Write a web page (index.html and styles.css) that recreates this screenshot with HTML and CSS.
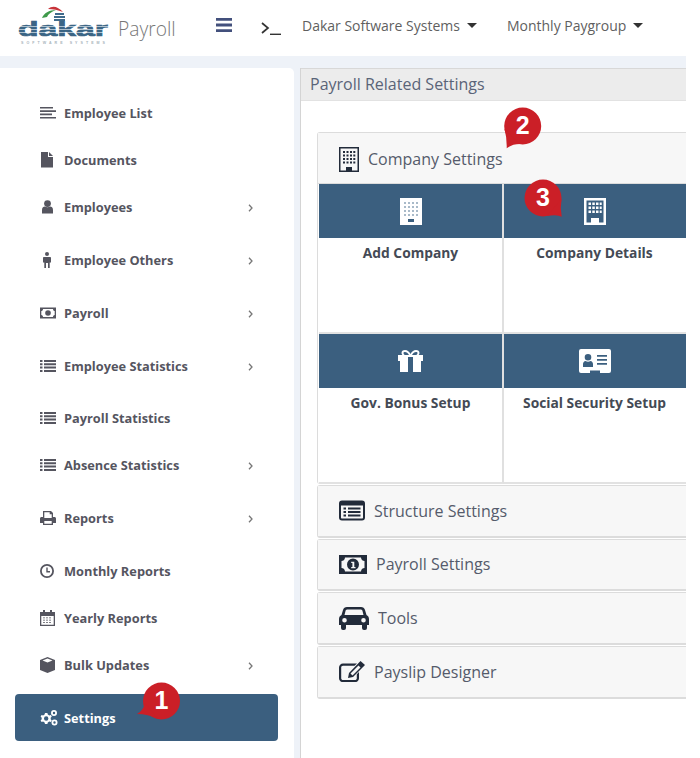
FILE: index.html
```html
<!DOCTYPE html>
<html lang="en">
<head>
<meta charset="utf-8">
<title>Payroll Related Settings</title>
<link rel="stylesheet" href="styles.css">
</head>
<body>
<div class="page">
  <header class="top">
    <svg class="logo" viewBox="0 0 92 40" aria-hidden="true">
      <path d="M31 3C36-1 41 1 46 6 41 4 36 3 31 3Z" fill="#c8343a"/>
      <path d="M25 12C27 7 32 4 39 4 34 6 31 8 30 11Z" fill="#3f9a4a"/>
      <rect x="38" y="7" width="9" height="2" fill="#3f6b8c"/>
      <rect x="37" y="10" width="11" height="2" fill="#3f6b8c"/>
      <rect x="37" y="13" width="11" height="2" fill="#3f6b8c"/>
      <text class="logo-word" x="46" y="30" text-anchor="middle" textLength="90" lengthAdjust="spacingAndGlyphs">dakar</text>
      <g class="logo-lines">
        <path d="M0 20.500H92M0 23.500H92M0 26.500H92"/>
      </g>
      <text class="logo-sub" x="46" y="38" text-anchor="middle" textLength="84">SOFTWARE SYSTEMS</text>
    </svg>
    <span class="brand">Payroll</span>
    <svg class="burger" viewBox="0 0 16 14" aria-hidden="true"><path d="M0 0h16v2.800H0zM0 5.600h16v2.800H0zM0 11.200h16V14H0z"/></svg>
    <svg class="term" viewBox="0 0 20 13" aria-hidden="true"><path d="M1 1l6 5-6 5" fill="none" stroke="currentColor" stroke-width="1.700"/><path d="M9 11.600h11v1.400H9z"/></svg>
    <span class="menu menu-company">Dakar Software Systems<i class="caret"></i></span>
    <span class="menu menu-group">Monthly Paygroup<i class="caret"></i></span>
  </header>

  <div class="shell">
    <nav class="side">
      <a class="item"><svg class="ic" viewBox="0 0 16 12"><path d="M0 0h13v1.600H0zM0 3.300h16v1.600H0zM0 6.600h12v1.600H0zM0 9.900h16v1.600H0z"/></svg><span>Employee List</span></a>
      <a class="item"><svg class="ic" viewBox="0 0 16 16"><path d="M1 0h7v5h5v10.500H1zM9 0l4 4H9z"/></svg><span>Documents</span></a>
      <a class="item more"><svg class="ic" viewBox="0 0 16 14"><circle cx="7.500" cy="3.600" r="3.400"/><path d="M2 13.500V10c0-2.400 1.600-3.400 2.800-3.400 1.600 1 3.800 1 5.400 0C11.400 6.600 13 7.600 13 10v3.500z"/></svg><span>Employees</span><svg class="chev" viewBox="0 0 5 8"><path d="M1 .8l3 3.200-3 3.200"/></svg></a>
      <a class="item more"><svg class="ic" viewBox="0 0 16 16"><circle cx="7" cy="2" r="2"/><path d="M4 5h6c.7 0 1 .5 1 1v4.500H9.700V16H8V11H6v5H4.300V10.500H3V6c0-.5.300-1 1-1z"/></svg><span>Employee Others</span><svg class="chev" viewBox="0 0 5 8"><path d="M1 .8l3 3.200-3 3.200"/></svg></a>
      <a class="item more"><svg class="ic" viewBox="0 0 16 11"><path fill-rule="evenodd" d="M0 0h16v11H0zM3 1.500C3 3 2 3.500 1.300 3.500v4C2.500 7.500 3 8.500 3 9.500h10c0-1 .5-2 1.700-2v-4C14 3.500 13 3 13 1.500z"/><circle cx="8" cy="5.500" r="2.800"/></svg><span>Payroll</span><svg class="chev" viewBox="0 0 5 8"><path d="M1 .8l3 3.200-3 3.200"/></svg></a>
      <a class="item more short"><svg class="ic" viewBox="0 0 16 12"><path d="M0 0h2.500v2H0zM4 0h12v2H4zM0 3.300h2.500v2H0zM4 3.300h12v2H4zM0 6.600h2.500v2H0zM4 6.600h12v2H4zM0 9.900h2.500v2H0zM4 9.900h12v2H4z"/></svg><span>Employee Statistics</span><svg class="chev" viewBox="0 0 5 8"><path d="M1 .8l3 3.200-3 3.200"/></svg></a>
      <a class="item"><svg class="ic" viewBox="0 0 16 12"><path d="M0 0h2.500v2H0zM4 0h12v2H4zM0 3.300h2.500v2H0zM4 3.300h12v2H4zM0 6.600h2.500v2H0zM4 6.600h12v2H4zM0 9.900h2.500v2H0zM4 9.900h12v2H4z"/></svg><span>Payroll Statistics</span></a>
      <a class="item more"><svg class="ic" viewBox="0 0 16 12"><path d="M0 0h2.500v2H0zM4 0h12v2H4zM0 3.300h2.500v2H0zM4 3.300h12v2H4zM0 6.600h2.500v2H0zM4 6.600h12v2H4zM0 9.900h2.500v2H0zM4 9.900h12v2H4z"/></svg><span>Absence Statistics</span><svg class="chev" viewBox="0 0 5 8"><path d="M1 .8l3 3.200-3 3.200"/></svg></a>
      <a class="item more"><svg class="ic" viewBox="0 0 16 14"><path fill-rule="evenodd" d="M3 0h8l2 2v4h1.500c.8 0 1.500.7 1.500 1.500V12h-3v2H3v-2H0V7.500C0 6.700.7 6 1.500 6H3zM4.300 1.300V7h7.400V3.300h-2v-2zM4.300 10v2.700h7.400V10z"/></svg><span>Reports</span><svg class="chev" viewBox="0 0 5 8"><path d="M1 .8l3 3.200-3 3.200"/></svg></a>
      <a class="item"><svg class="ic" viewBox="0 0 16 14"><path fill-rule="evenodd" d="M7 0a7 7 0 1 1 0 14A7 7 0 0 1 7 0zm0 1.800a5.200 5.200 0 1 0 0 10.400A5.200 5.200 0 0 0 7 1.800zM6.300 3.500h1.400v3.600H10v1.300H6.300z"/></svg><span>Monthly Reports</span></a>
      <a class="item"><svg class="ic" viewBox="0 0 16 16"><path fill-rule="evenodd" d="M0 2h3V0h2v2h5V0h2v2h3v14H0zM1.300 6v8.700h12.400V6z"/><path d="M3 7.500h2v.8H3zM6 7.500h2v.8H6zM9 7.500h2v.8H9zM3 9.800h2v.8H3zM6 9.800h2v.8H6zM9 9.800h2v.8H9zM3 12h2v.8H3zM6 12h2v.8H6zM9 12h2v.8H9z"/></svg><span>Yearly Reports</span></a>
      <a class="item more"><svg class="ic" viewBox="0 0 16 16"><path fill-rule="evenodd" d="M7.500 0L15 3v10l-7.500 3L0 13V3zM7.500 1.500L2.500 3.500l5 2 5-2z"/></svg><span>Bulk Updates</span><svg class="chev" viewBox="0 0 5 8"><path d="M1 .8l3 3.200-3 3.200"/></svg></a>
      <a class="item active"><svg class="ic ic-wide" viewBox="0 0 18 16"><path fill-rule="evenodd" d="M5 3h2.400l.4 1.600 1.500.8 1.500-.5 1 1.500-1.100 1.300v1.600l1.100 1.300-1 1.500-1.500-.5-1.500.8L7.400 14H5l-.4-1.600-1.500-.8-1.500.5-1-1.500 1.100-1.300V7.700L.6 6.400l1-1.500 1.500.5 1.500-.8zM6.200 6.300a2.200 2.200 0 1 0 0 4.400 2.200 2.200 0 0 0 0-4.400z"/><path fill-rule="evenodd" d="M14 0a3 3 0 1 1 0 6 3 3 0 0 1 0-6zm0 1.800a1.200 1.200 0 1 0 0 2.400 1.200 1.200 0 0 0 0-2.400zM14.500 9.500a3 3 0 1 1 0 6 3 3 0 0 1 0-6zm0 1.800a1.200 1.200 0 1 0 0 2.400 1.200 1.200 0 0 0 0-2.400z"/></svg><span>Settings</span></a>
    </nav>

    <main class="main">
      <div class="panel-title">Payroll Related Settings</div>
      <div class="accordion">
        <section class="acc open">
          <h2 class="acc-head">
            <svg class="acc-ic w20" viewBox="0 0 20 25"><path fill-rule="evenodd" d="M0 0h20v25H0zM1.500 1.500v22H7V20h6v3.500h5.500v-22z"/><path d="M4 4h2v2H4zM7.500 4h2v2h-2zM11 4h2v2h-2zM14.300 4h2v2h-2zM4 7.500h2v2H4zM7.500 7.500h2v2h-2zM11 7.500h2v2h-2zM14.300 7.500h2v2h-2zM4 11h2v2H4zM7.500 11h2v2h-2zM11 11h2v2h-2zM14.300 11h2v2h-2zM4 14.500h2v2H4zM7.500 14.500h2v2h-2zM11 14.500h2v2h-2zM14.300 14.500h2v2h-2z"/></svg>
            <span>Company Settings</span>
          </h2>
          <div class="tiles">
            <a class="tile">
              <span class="tile-band"><svg class="tile-ic" viewBox="0 0 22 27"><path fill-rule="evenodd" d="M0 0h22v27H0zM8 21v3h6v-3z"/><path class="dots" d="M4 4h2v2H4zM8 4h2v2H8zM12 4h2v2h-2zM16 4h2v2h-2zM4 8h2v2H4zM8 8h2v2H8zM12 8h2v2h-2zM16 8h2v2h-2zM4 12h2v2H4zM8 12h2v2H8zM12 12h2v2h-2zM16 12h2v2h-2zM4 16h2v2H4zM8 16h2v2H8zM12 16h2v2h-2zM16 16h2v2h-2z"/></svg></span>
              <span class="tile-name">Add Company</span>
            </a>
            <a class="tile">
              <span class="tile-band"><svg class="tile-ic" viewBox="0 0 22 27"><path fill-rule="evenodd" d="M0 0h22v27H0zM2.500 2.500v22H7V20h8v4.500h4.500v-22z"/><path d="M4.500 4.500h2.500V7H4.500zM8.300 4.500h2.500V7H8.300zM12 4.500h2.500V7H12zM15.700 4.500h2V7h-2zM4.500 8.500h2.500V11H4.500zM8.300 8.500h2.500V11H8.300zM12 8.500h2.500V11H12zM15.700 8.500h2V11h-2zM4.500 12.500h2.500V15H4.500zM8.300 12.500h2.500V15H8.300zM12 12.500h2.500V15H12zM15.700 12.500h2V15h-2z"/></svg></span>
              <span class="tile-name">Company Details</span>
            </a>
            <a class="tile">
              <span class="tile-band"><svg class="tile-ic gift" viewBox="0 0 25 22"><path fill-rule="evenodd" d="M7 0c2.500 0 4.500 2 5.500 4C13.500 2 15.500 0 18 0c2.200 0 3.500 1.300 3.500 3 0 .8-.3 1.500-.8 2H25v6h-2v11H2V11H0V5h4.300C3.800 4.500 3.500 3.800 3.500 3 3.500 1.300 4.800 0 7 0zM7 2C6 2 5.500 2.400 5.500 3S6 5 7 5h4C10 3 8.500 2 7 2zm11 0c-1.500 0-3 1-4 3h4c1 0 1.500-1.400 1.500-2S19 2 18 2zM10 7v15h5V7z"/></svg></span>
              <span class="tile-name">Gov. Bonus Setup</span>
            </a>
            <a class="tile">
              <span class="tile-band"><svg class="tile-ic card" viewBox="0 0 32 24"><path fill-rule="evenodd" d="M2 0h28a2 2 0 0 1 2 2v20a2 2 0 0 1-2 2H21v-2.500H11V24H2a2 2 0 0 1-2-2V2a2 2 0 0 1 2-2zM9 5a3.300 3.300 0 1 0 0 6.600A3.300 3.300 0 0 0 9 5zM4 18h10v-3c0-1.500-1.200-3-2.500-3-1.500 1-3.500 1-5 0C5.200 12 4 13.500 4 15zM18 6v1.800h10V6zM18 10v1.800h10V10zM18 14v1.800h10V14z"/></svg></span>
              <span class="tile-name">Social Security Setup</span>
            </a>
          </div>
        </section>
        <section class="acc">
          <h2 class="acc-head">
            <svg class="acc-ic w26" viewBox="0 0 26 20"><path fill-rule="evenodd" d="M3 0h20a3 3 0 0 1 3 3v14a3 3 0 0 1-3 3H3a3 3 0 0 1-3-3V3a3 3 0 0 1 3-3zM2 5v12c0 .6.400 1 1 1h20c.6 0 1-.4 1-1V5z"/><path d="M4.500 7H7v2H4.500zM9 7h12.500v2H9zM4.500 10.500H7v2H4.500zM9 10.500h12.500v2H9zM4.500 14H7v2H4.500zM9 14h12.500v2H9z"/></svg>
            <span>Structure Settings</span>
          </h2>
        </section>
        <section class="acc">
          <h2 class="acc-head">
            <svg class="acc-ic w28" viewBox="0 0 28 19"><path fill-rule="evenodd" d="M0 0h28v19H0zM6 2.500C6 5 4 6 2.500 6v7C4 13 6 14 6 16.500h16C22 14 24 13 25.500 13V6C24 6 22 5 22 2.500z"/><path fill-rule="evenodd" d="M14 3.500a6 6 0 1 1 0 12 6 6 0 0 1 0-12zm-1.800 3.200v1.200h1.200v4h-1.200v1.300h4.300v-1.300h-1.200V6.700h-1.300z"/></svg>
            <span>Payroll Settings</span>
          </h2>
        </section>
        <section class="acc">
          <h2 class="acc-head">
            <svg class="acc-ic w30" viewBox="0 0 30 23"><path fill-rule="evenodd" d="M8 0h14c2 0 3.500 1.300 4 3l1.500 5c1.500.8 2.500 2.200 2.500 4v6h-2v3a2 2 0 0 1-2 2h-1a2 2 0 0 1-2-2v-3H7v3a2 2 0 0 1-2 2H4a2 2 0 0 1-2-2v-3H0v-6c0-1.800 1-3.200 2.500-4L4 3c.5-1.700 2-3 4-3zM8.500 2.500C7.500 2.500 6.700 3 6.500 4L5.500 8h19l-1-4c-.2-1-1-1.500-2-1.500zM5.500 11a2.300 2.300 0 1 0 0 4.600 2.300 2.300 0 0 0 0-4.600zm19 0a2.300 2.300 0 1 0 0 4.600 2.300 2.300 0 0 0 0-4.600z"/></svg>
            <span>Tools</span>
          </h2>
        </section>
        <section class="acc">
          <h2 class="acc-head">
            <svg class="acc-ic w26" viewBox="0 0 26 21"><path d="M4 2.500h14l-2.500 2.300H4c-1 0-1.800.8-1.800 1.800v10.600c0 1 .8 1.800 1.800 1.800h12c1 0 1.800-.8 1.800-1.800v-4l2.200-2.200v6.200c0 2.200-1.800 4-4 4H4c-2.200 0-4-1.800-4-4V6.500c0-2.200 1.800-4 4-4z"/><path d="M21.500 0L26 4 14 16l-5 1 1-5zM19.500 4.500l-8 8 2 2 8-8z"/></svg>
            <span>Payslip Designer</span>
          </h2>
        </section>
      </div>
    </main>
  </div>

  <svg class="callout c1" viewBox="0 0 46 46"><circle class="bub" cx="27.500" cy="23" r="18.500"/><path class="bub" d="M3 36Q9 33 11 25L24 41Q14 36 3 36Z"/><text x="27.500" y="22">1</text></svg>
  <svg class="callout c2" viewBox="0 0 46 46"><circle class="bub" cx="22.700" cy="23" r="18.500"/><path class="bub" d="M6.700 45.300Q7 35 4.500 26L20 41Q12 41 6.700 45.300Z"/><text x="22.700" y="22">2</text></svg>
  <svg class="callout c3" viewBox="0 0 46 46"><circle class="bub" cx="22" cy="23" r="18.500"/><path class="bub" d="M40.700 41.700Q36 39 26 41L40.500 24Q39 33 40.700 41.700Z"/><text x="22" y="22">3</text></svg>
</div>
</body>
</html>
```
FILE: styles.css
```css
* { box-sizing: border-box; }
html, body { margin: 0; padding: 0; background: #fff; }
body { font-family: "Open Sans", "Liberation Sans", sans-serif; }

.page { position: relative; width: 700px; height: 758px; overflow: hidden; background: #fff; }

.top { display: flex; align-items: center; height: 56px; padding-left: 17px; color: #5f5f5f; }
.logo { width: 92px; height: 40px; flex: none; margin-top: -4px; }
.logo-word { font: 700 21px "Liberation Sans", sans-serif; fill: #3a6585; stroke: #3a6585; stroke-width: .7; }
.logo-lines path { stroke: #fff; stroke-width: .6; fill: none; }
.logo-sub { font: 700 3.600px "Liberation Sans", sans-serif; fill: #a9b4bc; }
.brand { margin-left: 9px; width: 98px; font-size: 19.200px; font-weight: 300; color: #777; flex: none; }
.burger { width: 16px; height: 14px; fill: #43507c; flex: none; margin-top: -6px; }
.term { width: 20px; height: 13px; margin-left: 29px; fill: #333; color: #333; flex: none; }
.menu { display: flex; align-items: center; font-size: 14px; flex: none; margin-top: -6px; }
.menu-company { margin-left: 21px; }
.menu-group { margin-left: 30px; }
.caret { width: 0; height: 0; margin-left: 7px; border: 5px solid transparent; border-top-color: #333; border-bottom: 0; }

.shell { display: flex; gap: 6px; width: 686px; height: 702px; padding-top: 12px; background: #eef2f8; }

.side { width: 294px; flex: none; padding: 22px 16px 0 15px; background: #fff; border-radius: 0 5px 0 0; }
.item { display: flex; align-items: flex-start; height: 47px; padding: 14px 24px 0 25px; font-size: 12.800px; line-height: 19px; font-weight: 700; color: #55555f; }
.item.more { height: 53px; }
.item.short { height: 52px; }
.item > span { flex: 1; }
.ic { width: 16px; height: 16px; margin: 1px 8px 0 0; fill: currentColor; flex: none; }
.ic-wide { width: 18px; margin-right: 6px; }
.chev { width: 5px; height: 8px; margin: 6px 1px 0 0; fill: none; stroke: #777; stroke-width: 1.300; flex: none; }
.item.active { margin-top: -1px; padding-top: 15px; color: #fff; background: #3b5f7f; border-radius: 4px; }

.main { flex: 1; min-width: 0; overflow: hidden; background: #fff; border-left: 1px solid #d4d4d4; }
.panel-title { height: 33px; padding: 4px 9px 0; font-size: 16px; line-height: 22px; color: #5a6478; background: #ececec; border-top: 1px solid #d8d8d8; border-bottom: 1px solid #e2e2e2; }
.accordion { display: flex; flex-direction: column; gap: 1px; width: 420px; margin: 31px 0 0 16px; }
.acc { border: 1px solid #dcdcdc; border-bottom-width: 2px; border-radius: 3px; }
.acc-head { display: flex; align-items: center; gap: 9px; height: 49.670px; margin: 0; padding-left: 21px; font-size: 16px; font-weight: 400; color: #555b6b; background: #f7f7f7; }
.acc.open { border-bottom: 0; }
.acc.open .acc-head { height: 51px; padding-top: 2px; border-bottom: 1px solid #dcdcdc; }
.acc-ic { flex: none; height: 25px; fill: #222b3a; }
.w20 { width: 20px; }
.w26 { width: 26px; height: 21px; }
.w28 { width: 28px; height: 19px; }
.w30 { width: 30px; height: 23px; }

.tiles { display: grid; grid-template-columns: 185px 183px 52px; padding-left: 1px; }
.tile { display: flex; flex-direction: column; height: 150px; grid-column: 1; border-right: 2px solid #e0e0e0; border-bottom: 2px solid #e2e2e2; }
.tile:nth-child(even) { grid-column: 2 / 4; border-right: 0; }
.tile-band { display: flex; align-items: center; justify-content: center; height: 54px; flex: none; background: #3b5f7f; }
.tile-ic { width: 22px; height: 27px; fill: #fff; }
.tile:nth-child(even) .tile-band { width: 182px; }
.tile:nth-child(even) .tile-name { width: 181px; }
.dots { fill: #a9bac9; }
.gift { width: 25px; height: 22px; }
.card { width: 32px; height: 24px; }
.tile-name { padding-top: 5px; font-size: 13.800px; line-height: 19px; font-weight: 700; text-align: center; color: #444a55; }

.callout { position: absolute; width: 46px; height: 46px; overflow: visible; }
.bub { fill: #cb1f27; }
.callout text { font: 700 25px "Liberation Sans", sans-serif; fill: #fff; text-anchor: middle; dominant-baseline: central; }
.c1 { left: 134px; top: 678px; }
.c2 { left: 500px; top: 103px; }
.c3 { left: 521px; top: 175px; }
```
